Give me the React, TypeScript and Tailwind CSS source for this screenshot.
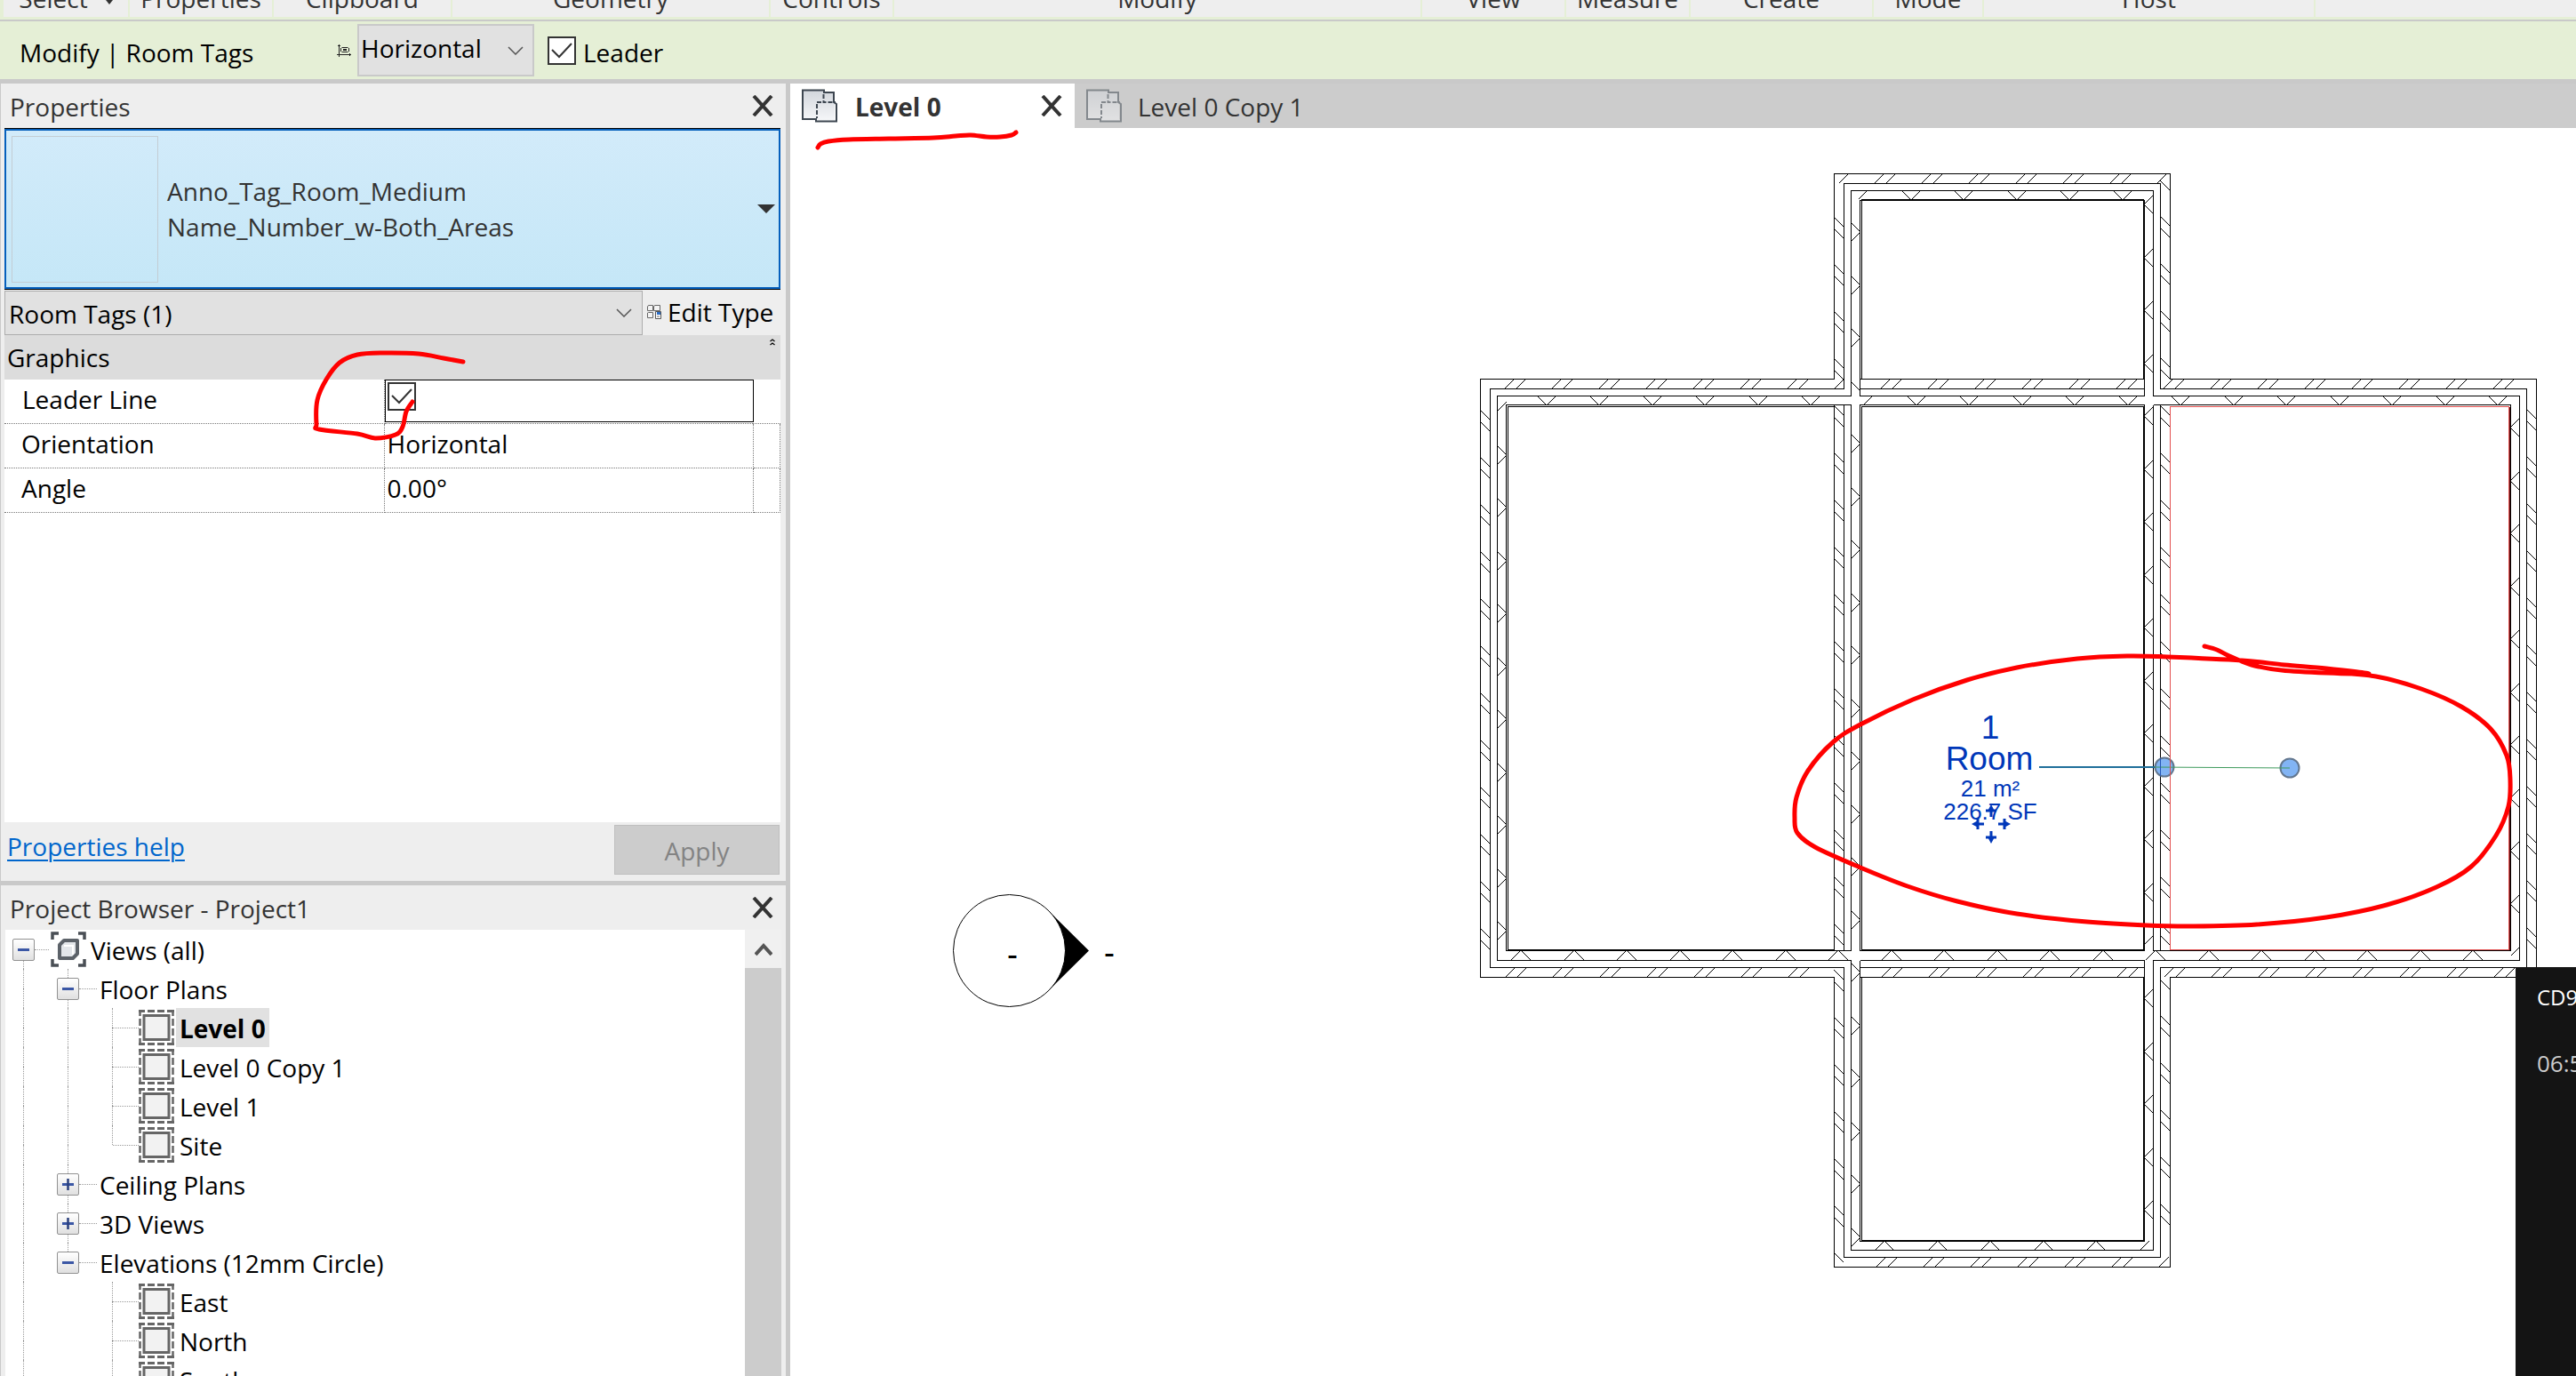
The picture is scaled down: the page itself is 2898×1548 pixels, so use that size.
import type { ReactNode } from "react";

type Point = [number, number];

/* ---------- Small icons ---------- */

function CloseIcon() {
  return (
    <svg viewBox="0 0 24 24" className="size-6" fill="none" stroke="#333" strokeWidth="4">
      <path d="M2 1 L22 23 M22 1 L2 23" />
    </svg>
  );
}

function Chevron({ className }: { className: string }) {
  return (
    <svg viewBox="0 0 18 10" className={className} fill="none" stroke="#555" strokeWidth="1.5">
      <path d="M1 1 L9 9 L17 1" />
    </svg>
  );
}

function TagIcon() {
  return (
    <svg viewBox="0 0 17 16" className="h-4 w-[17px]" fill="none" stroke="#222" strokeWidth="1">
      <path d="M2.5 1 V15 M0 12.5 H16 M1 2.5 H4 M14.5 11 V14 M5.5 4.5 H12.5 M5.5 9.5 H12.5 M4.5 5 V9 M13.5 5 V9 M7 6.5 H11 M7 7.5 H11" />
    </svg>
  );
}

function EditTypeIcon() {
  return (
    <svg viewBox="0 0 18 18" className="size-[18px]" fill="#f4f4f4" stroke="#666" strokeWidth="1">
      <path d="M2.5 1.5 H7.5 V7.5 H1.5 V3 Z M9.5 1.5 H15.5 V7.5 H8.5 V3 Z M2.5 9.5 H7.5 V15.5 H1.5 V10 Z" />
      <path d="M10.5 8.5 H16.5 V16.5 H10.5 Z" fill="#fff" stroke="#555" />
      <path d="M12 9 H16 V12 H12 Z" fill="#2b6cc4" stroke="none" />
      <path d="M12 14 H15" />
    </svg>
  );
}

function SheetIcon({ faded }: { faded?: boolean }) {
  return (
    <svg viewBox="0 0 40 38" className={faded ? "h-[38px] w-10 opacity-50" : "h-[38px] w-10"}>
      <defs>
        <linearGradient id={faded ? "sheetB" : "sheetA"} x1="0" y1="0" x2="0" y2="1">
          <stop offset="0" stopColor="#d2d6dc" />
          <stop offset="1" stopColor="#f6f7f9" />
        </linearGradient>
      </defs>
      <g fill={faded ? "url(#sheetB)" : "url(#sheetA)"} stroke="#3d4650" strokeWidth="2">
        <path d="M1 1.5 H24 L26 4 H37 V34 L39 36 H16 V34 H1 Z" stroke="none" />
        <path d="M16 34 H1 V1.5 H25 V4" fill="none" />
        <path d="M24 4 H36 V15 L39 17 V36.5 H16 V33" fill="none" />
      </g>
      <path d="M24.5 6 V15 H38 M17 15 H22 M17 17 V33" fill="none" stroke="#3d4650" strokeWidth="2" strokeDasharray="5 2" />
    </svg>
  );
}

function ViewsIcon() {
  return (
    <svg viewBox="0 0 40 40" className="size-10" fill="none" stroke="#4a4f55">
      <path d="M2 9 V2 H9 M31 2 H38 V9 M2 31 V38 H9 M31 38 H38 V31" strokeWidth="3.5" />
      <path d="M10 15 L15 10 H30 V25 L25 30 H10 Z" strokeWidth="4" fill="#e3e6ea" strokeLinejoin="round" stroke="#5c6269" />
      <path d="M15 16 H25 V26" strokeWidth="2" stroke="#fff" />
    </svg>
  );
}

function PlanIcon() {
  return (
    <svg viewBox="0 0 40 40" className="size-10 shrink-0" fill="none" stroke="#666">
      <path d="M0 1.5 H40 M0 38.5 H40" strokeWidth="3" strokeDasharray="8 3" strokeDashoffset="1" />
      <path d="M1.5 0 V40 M38.5 0 V40" strokeWidth="2.5" strokeDasharray="8 3" strokeDashoffset="1" />
      <rect x="6" y="6.5" width="28" height="27" fill="#f2f2f2" strokeWidth="3" />
    </svg>
  );
}

function Expander({ open, label }: { open: boolean; label: string }) {
  return (
    <button
      type="button"
      aria-label={(open ? "Collapse " : "Expand ") + label}
      aria-expanded={open}
      className="flex size-[25px] shrink-0 items-center justify-center rounded-[2px] border border-[#919191] bg-linear-to-b from-white to-[#e0e0e0]"
    >
      <svg viewBox="0 0 13 13" className="size-[13px]" stroke="#3b57a5" strokeWidth="3">
        <path d="M0 6.5 H13" />
        {!open && <path d="M6.5 0 V13" stroke="#2a3f7d" strokeWidth="2.5" />}
      </svg>
    </button>
  );
}

function CheckBox({ label, className, id }: { label?: string; className: string; id: string }) {
  return (
    <span className={className}>
      <input
        id={id}
        aria-label={label}
        type="checkbox"
        defaultChecked
        className="col-start-1 row-start-1 size-8 appearance-none border-2 border-[#333] bg-white"
      />
      <svg
        viewBox="0 0 32 32"
        className="pointer-events-none col-start-1 row-start-1 size-8"
        fill="none"
        stroke="#333"
        strokeWidth="2"
      >
        <path d="M5 15 L13 23 L27 8" />
      </svg>
    </span>
  );
}

/* ---------- Ribbon ---------- */

function RibbonPanel({ width, label, children }: { width: string; label: string; children?: ReactNode }) {
  return (
    <div className={"flex h-[19px] items-end justify-center gap-5 overflow-hidden bg-[#eee] pb-0.5 text-[#333] " + width}>
      <span className="leading-[38px]">{label}</span>
      {children}
    </div>
  );
}

function Ribbon() {
  return (
    <header className="flex h-[22px] shrink-0 gap-0.5 overflow-hidden bg-[#e5efd6] pl-1">
      <RibbonPanel width="w-[140px]" label="Select">
        <svg viewBox="0 0 8 5" className="mb-3 h-[5px] w-2" fill="#333">
          <path d="M0 0 H8 L4 5 Z" />
        </svg>
      </RibbonPanel>
      <RibbonPanel width="w-[160px]" label="Properties" />
      <RibbonPanel width="w-[199px]" label="Clipboard" />
      <RibbonPanel width="w-[356px]" label="Geometry" />
      <RibbonPanel width="w-[137px]" label="Controls" />
      <RibbonPanel width="w-[592px]" label="Modify" />
      <RibbonPanel width="w-[160px]" label="View" />
      <RibbonPanel width="w-[138px]" label="Measure" />
      <RibbonPanel width="w-[204px]" label="Create" />
      <RibbonPanel width="w-[122px]" label="Mode" />
      <RibbonPanel width="w-[371px]" label="Host" />
      <RibbonPanel width="flex-1" label="" />
    </header>
  );
}

function OptionsBar() {
  return (
    <div className="flex h-[72px] shrink-0 items-center border-t-2 border-b-5 border-[#c9c9c9] bg-[#e5efd6] pl-[22px]">
      <h1 className="w-[357px] pt-1">Modify | Room Tags</h1>
      <TagIcon />
      <div className="ml-1.5 grid w-[199px]">
        <select
          aria-label="Tag orientation"
          className="col-start-1 row-start-1 h-[59px] appearance-none border-2 border-[#c9c9c9] bg-[#e1e1e1] pb-1.5 pl-0.5"
        >
          <option>Horizontal</option>
        </select>
        <Chevron className="pointer-events-none col-start-1 row-start-1 mr-3 h-2.5 w-[18px] self-center justify-self-end" />
      </div>
      <label htmlFor="leader" className="ml-[15px] flex items-center gap-2">
        <CheckBox id="leader" className="grid" />
        <span className="pt-1">Leader</span>
      </label>
    </div>
  );
}

/* ---------- Properties palette ---------- */

function PaletteHeader({ title }: { title: string }) {
  return (
    <div className="flex h-[50px] shrink-0 items-center justify-between pr-3.5 pl-2.5 text-[#333]">
      <h2 className="pt-0.5">{title}</h2>
      <button type="button" aria-label={"Close " + title}>
        <CloseIcon />
      </button>
    </div>
  );
}

function Properties() {
  return (
    <section className="flex h-[902px] shrink-0 flex-col border-b-5 border-[#c9c9c9]">
      <PaletteHeader title="Properties" />
      <div className="ml-1 flex flex-1 flex-col pr-1.5">
        <button
          type="button"
          className="my-px flex h-[180px] shrink-0 items-center border-2 border-[#0560bd] bg-linear-to-b from-[#d2ebfa] to-[#c5e7f7] pl-1.5 text-left text-[#333] shadow-[0_-1px_0_#000,0_1px_0_#000]"
        >
          <span className="mr-2.5 h-[165px] w-[165px] border border-[#c3cdd4]" />
          <span className="flex-1 leading-10">
            Anno_Tag_Room_Medium
            <br />
            Name_Number_w-Both_Areas
          </span>
          <svg viewBox="0 0 20 10" className="mr-1 h-2.5 w-5" fill="#333">
            <path d="M0 0 H20 L10 10 Z" />
          </svg>
        </button>
        <div className="mt-px flex h-[50px] shrink-0">
          <div className="grid flex-1">
            <select
              aria-label="Selected elements"
              className="col-start-1 row-start-1 appearance-none border border-[#adadad] bg-[#e1e1e1] pt-0.5 pl-1"
            >
              <option>Room Tags (1)</option>
            </select>
            <Chevron className="pointer-events-none col-start-1 row-start-1 mr-3 h-2.5 w-[18px] self-center justify-self-end" />
          </div>
          <button type="button" className="flex w-[155px] items-center gap-1.5 pb-0.5 pl-1 whitespace-nowrap">
            <EditTypeIcon />
            Edit Type
          </button>
        </div>
        <div className="flex-1 bg-white">
          <table className="w-full table-fixed border-collapse">
            <colgroup>
              <col className="w-[427px]" />
              <col />
              <col className="w-[30px]" />
            </colgroup>
            <thead>
              <tr className="h-[50px] bg-[#dcdcdc]">
                <th colSpan={2} scope="colgroup" className="pl-[3px] text-left font-normal">
                  Graphics
                </th>
                <th className="align-top">
                  <button type="button" aria-label="Collapse Graphics" className="block pt-1 pl-[18px]">
                    <svg viewBox="0 0 6 8" className="h-2 w-1.5" fill="none" stroke="#000" strokeWidth="1.2">
                      <path d="M0.5 3 L3 1 L5.5 3 M0.5 7 L3 5 L5.5 7" />
                    </svg>
                  </button>
                </th>
              </tr>
            </thead>
            <tbody>
              <tr className="h-[49px]">
                <th scope="row" className="border-r border-b border-dotted border-[#777] p-0 pb-1 pl-5 text-left font-normal">
                  Leader Line
                </th>
                <td className="p-0">
                  <div className="flex h-[48px] items-start border border-black pt-0.5 pl-0.5">
                    <CheckBox id="leader-line" label="Leader Line" className="grid" />
                  </div>
                </td>
                <td className="border-b border-dotted border-[#777]" />
              </tr>
              <tr className="h-[50px]">
                <th scope="row" className="border border-l-0 border-dotted border-[#777] p-0 pb-1 pl-[19px] text-left font-normal">
                  Orientation
                </th>
                <td className="border border-dotted border-[#777] p-0 pb-1 pl-[3px]">Horizontal</td>
                <td className="border border-dotted border-[#777]" />
              </tr>
              <tr className="h-[50px]">
                <th scope="row" className="border border-l-0 border-dotted border-[#777] p-0 pb-1 pl-[19px] text-left font-normal">
                  Angle
                </th>
                <td className="border border-dotted border-[#777] p-0 pb-1 pl-[3px]">0.00°</td>
                <td className="border border-dotted border-[#777]" />
              </tr>
            </tbody>
          </table>
        </div>
        <div className="flex h-[66px] shrink-0 items-start justify-between pt-[3px] pr-px">
          <a href="#properties-help" className="pt-1.5 pl-[3px] text-[#0066cc] underline decoration-2 underline-offset-4">
            Properties help
          </a>
          <button type="button" disabled className="h-14 w-[186px] border border-[#bfbfbf] bg-[#ccc] pt-0.5 text-[#838383]">
            Apply
          </button>
        </div>
      </div>
    </section>
  );
}

/* ---------- Project browser ---------- */

type Row = { level: number; label: string; open?: boolean; active?: boolean; last?: boolean; closed?: boolean };

const rows: Row[] = [
  { level: 0, label: "Views (all)", open: true },
  { level: 1, label: "Floor Plans", open: true },
  { level: 2, label: "Level 0", active: true },
  { level: 2, label: "Level 0 Copy 1" },
  { level: 2, label: "Level 1" },
  { level: 2, label: "Site", last: true },
  { level: 1, label: "Ceiling Plans", open: false },
  { level: 1, label: "3D Views", open: false },
  { level: 1, label: "Elevations (12mm Circle)", open: true, last: true },
  { level: 2, label: "East", closed: true },
  { level: 2, label: "North", closed: true },
  { level: 2, label: "South", closed: true },
];

function Guide({ above, below, children }: { above: boolean; below: boolean; children?: ReactNode }) {
  return (
    <span className="flex h-full w-[25px] shrink-0 flex-col items-center">
      <span className={above ? "w-px flex-1 border-l border-dotted border-[#999]" : "flex-1"} />
      {children}
      <span className={below ? "w-px flex-1 border-l border-dotted border-[#999]" : "flex-1"} />
    </span>
  );
}

function TreeRow({ row }: { row: Row }) {
  if (row.level === 0) {
    return (
      <li role="treeitem" className="flex h-11 items-center pl-2">
        <Guide above={false} below>
          <Expander open label={row.label} />
        </Guide>
        <span className="mr-0.5 w-4 border-t border-dotted border-[#999]" />
        <ViewsIcon />
        <span className="pt-0.5 pl-[5px]">{row.label}</span>
      </li>
    );
  }
  if (row.level === 1) {
    return (
      <li role="treeitem" className="flex h-11 items-center pl-2">
        <Guide above below />
        <span className="w-[25px]" />
        <Guide above below={!row.last}>
          <Expander open={!!row.open} label={row.label} />
        </Guide>
        <span className="mr-[3px] w-5 border-t border-dotted border-[#999]" />
        <span className="pt-0.5">{row.label}</span>
      </li>
    );
  }
  return (
    <li role="treeitem" className="flex h-11 items-center pl-2">
      <Guide above below />
      <span className="w-[25px]" />
      <Guide above={!row.closed} below={!row.closed} />
      <span className="w-[25px]" />
      <Guide above below={!row.last} />
      <span className="-ml-3 w-[29px] shrink-0 border-t border-dotted border-[#999]" />
      <PlanIcon />
      <span className={row.active ? "ml-0.5 h-11 bg-[#e1e1e1] px-1 leading-[46px] font-bold" : "ml-0.5 px-1 pt-0.5"}>
        {row.label}
      </span>
    </li>
  );
}

function ProjectBrowser() {
  return (
    <section className="flex min-h-0 flex-1 flex-col">
      <PaletteHeader title="Project Browser - Project1" />
      <div className="ml-[5px] flex min-h-0 flex-1 pr-[5px]">
        <ul role="tree" className="flex-1 overflow-hidden bg-white">
          {rows.map((row) => (
            <TreeRow key={row.label} row={row} />
          ))}
        </ul>
        <div className="flex w-[41px] flex-col bg-[#ccc]">
          <button type="button" aria-label="Scroll up" className="flex h-[43px] items-center justify-center bg-[#f0f0f0]">
            <svg viewBox="0 0 20 16" className="h-4 w-5" fill="none" stroke="#555" strokeWidth="4">
              <path d="M1 14 L10 4 L19 14" />
            </svg>
          </button>
        </div>
      </div>
    </section>
  );
}

/* ---------- Drawing area ---------- */

type Kind = "brickH" | "brickV" | "down" | "up" | "right" | "left";

/* [kind, across, depth, from, to, first mark]: a run of hatch marks in one wall leaf */
type Hatch = [Kind, number, number, number, number, number];

const hatches: Hatch[] = [
  ["brickH", 195, 11, 2066, 2441, 2055],
  ["brickH", 426, 11, 1676, 2074, 1692],
  ["brickH", 426, 11, 2092, 2411, 2115],
  ["brickH", 426, 11, 2430, 2853, 2433],
  ["brickH", 1088, 11, 1676, 2074, 1693],
  ["brickH", 1088, 11, 2093, 2411, 2116],
  ["brickH", 1088, 11, 2430, 2853, 2434],
  ["brickH", 1414, 11, 2074, 2441, 2110],
  ["brickV", 2063, 11, 206, 437, 244],
  ["brickV", 2430, 11, 200, 437, 190],
  ["brickV", 2063, 11, 456, 1069, 456],
  ["brickV", 2430, 11, 456, 1069, 456],
  ["brickV", 2063, 11, 1091, 1425, 1091],
  ["brickV", 2430, 11, 1102, 1414, 1089],
  ["brickV", 1665, 11, 437, 1099, 461],
  ["brickV", 2842, 11, 437, 1099, 460],
  ["down", 214, 10, 2083, 2411, 2079],
  ["down", 445, 10, 1684, 2082, 1669],
  ["down", 445, 10, 2092, 2411, 2085],
  ["down", 445, 10, 2422, 2834, 2442],
  ["up", 1069, 11, 1684, 2834, 1699],
  ["up", 1396, 10, 2092, 2422, 2109],
  ["right", 2082, 10, 225, 445, 250],
  ["right", 2082, 10, 455, 1069, 488],
  ["right", 2082, 10, 1080, 1406, 1083],
  ["right", 1684, 10, 445, 1080, 441],
  ["left", 2412, 10, 214, 445, 219],
  ["left", 2412, 10, 457, 1069, 457],
  ["left", 2412, 10, 1080, 1406, 1112],
  ["left", 2824, 10, 445, 1080, 470],
];

function hatchPath([kind, at, d, from, to, start]: Hatch): string {
  const brick = kind === "brickH" || kind === "brickV";
  const pitch = brick ? 53 : 59.5;
  const parts: string[] = [];
  const stroke = (a: number, b: number, horizontal: boolean, c: number, e: number) => {
    if (Math.min(a, b) < from || Math.max(a, b) > to) return;
    parts.push(horizontal ? `M${a} ${c}L${b} ${e}` : `M${c} ${a}L${e} ${b}`);
  };
  for (let p = start; p < to; p += pitch) {
    const s = Math.round(p);
    if (kind === "brickH") {
      stroke(s, s + d, true, at + d, at);
      stroke(s + 13, s + 13 + d, true, at + d, at);
    } else if (kind === "brickV") {
      stroke(s, s + d, false, at, at + d);
      stroke(s + 13, s + 13 + d, false, at, at + d);
    } else {
      const horizontal = kind === "down" || kind === "up";
      const wide = kind === "down" || kind === "right";
      const base = wide ? at : at + d;
      const tip = wide ? at + d : at;
      stroke(s, s + d, horizontal, base, tip);
      stroke(s + d + 1, s + 2 * d + 1, horizontal, tip, base);
    }
  }
  return parts.join("");
}

const walls = [
  "M2063 426V195H2441V426H2853V1099H2441V1425H2063V1099H1665V426Z",
  "M2074 437V206H2430V437H2842V1088H2430V1414H2074V1088H1676V437Z",
  "M2082 445V214H2422V445H2834V1080H2422V1406H2082V1080H1684V445Z",
  "M2092 445V225H2412V445M2094 426V224H2411V426",
  "M2082 455H1694V1069H2082M2063 457H1696V1068H2063",
  "M2092 426H2412M2092 437H2412M2092 445H2412M2092 455H2412V1069H2092ZM2094 457H2411V1068H2094Z",
  "M2063 455V1069M2074 455V1069M2082 455V1069M2422 455V1069M2430 455V1069",
  "M2422 455H2824V1069H2422",
  "M2092 1080H2412M2092 1088H2412M2092 1099H2412",
  "M2092 1080V1396H2412V1080M2094 1099V1395H2411V1099",
].join("");

function MoveArrow({ x, y, turn }: { x: number; y: number; turn: number }) {
  return (
    <path
      transform={`translate(${x} ${y}) rotate(${turn})`}
      d="M-1.5 -7H1.5V-1.5H6V1.5H3L0 7L-3 1.5H-6V-1.5H-1.5Z"
      fill="#0037b9"
    />
  );
}

function FloorPlan() {
  return (
    <svg
      viewBox="889 144 2009 1404"
      preserveAspectRatio="xMinYMin meet"
      className="block size-full font-['Liberation_Sans',Arial,sans-serif]"
      role="img"
      aria-label="Floor plan, Level 0"
    >
      <g transform="translate(0.5 0.5)" fill="none" stroke="#000" strokeWidth="1">
        <path d={walls} shapeRendering="crispEdges" />
        <path d={hatches.map(hatchPath).join("")} shapeRendering="crispEdges" />
        <path d="M2441 457H2822V1068H2441Z" stroke="#e4504f" shapeRendering="crispEdges" />
        <path d="M2823 457V1068" stroke="#5a1010" shapeRendering="crispEdges" />
        <circle cx="1135" cy="1069" r="63" />
      </g>
      <path d="M1179 1024 L1225 1069.5 L1180 1114 A63 63 0 0 0 1179 1024 Z" />
      <g fontSize="36" fill="#000" textAnchor="middle">
        <text x="1139" y="1086">-</text>
        <text x="1248" y="1084">-</text>
      </g>
      <g fill="#0037b9" textAnchor="middle">
        <text x="2239" y="831" fontSize="37">1</text>
        <text x="2238" y="866" fontSize="37">Room</text>
        <text x="2239" y="896" fontSize="26">21 m²</text>
        <text x="2239" y="922" fontSize="26">226.7 SF</text>
      </g>
      <g fill="#82b4f4" stroke="#63778f" strokeWidth="2">
        <circle cx="2435" cy="863" r="10.5" />
        <circle cx="2576" cy="864" r="10.5" />
      </g>
      <path d="M2294 863H2424" stroke="#1f6f9a" strokeWidth="2" />
      <path d="M2424 863L2576 864" stroke="#3e9a5c" strokeWidth="1" />
      <path d="M2430.5 853V873" stroke="#2456b8" strokeWidth="1" />
      <path d="M2441.5 854V872" stroke="#e4504f" strokeWidth="1" />
      <MoveArrow x={2240} y={912} turn={180} />
      <MoveArrow x={2225} y={927} turn={90} />
      <MoveArrow x={2255} y={927} turn={-90} />
      <MoveArrow x={2240} y={942} turn={0} />
    </svg>
  );
}

function Workspace() {
  return (
    <main className="flex min-w-0 flex-1 flex-col bg-white">
      <div role="tablist" className="flex h-[50px] shrink-0 bg-[#ccc]">
        <div className="flex w-80 items-center bg-white pr-3.5 pl-[13px] text-[#333]">
          <SheetIcon />
          <button type="button" role="tab" aria-selected="true" className="flex-1 pt-0.5 pl-5 text-left font-bold">
            Level 0
          </button>
          <button type="button" aria-label="Close Level 0">
            <CloseIcon />
          </button>
        </div>
        <button type="button" role="tab" aria-selected="false" className="flex items-center gap-[18px] pl-[13px] text-[#333]">
          <SheetIcon faded />
          <span className="pt-0.5">Level 0 Copy 1</span>
        </button>
      </div>
      <div className="min-h-0 flex-1">
        <FloorPlan />
      </div>
    </main>
  );
}

/* ---------- Pen marks ---------- */

const marks: Point[][] = [
  [[920, 166], [923, 162], [932, 159], [955, 157], [1000, 156], [1050, 155], [1075, 153], [1092, 152], [1110, 154], [1125, 154], [1138, 152], [1143, 149]],
  [[521, 407], [499, 403], [471, 398], [430, 397], [402, 399], [382, 408], [367, 427], [357, 450], [356, 477], [359, 483], [402, 488], [422, 493], [445, 489], [453, 480], [457, 463], [464, 452]],
  [
    [2480, 727], [2494, 731], [2508, 738], [2533, 748], [2567, 754], [2617, 757], [2665, 758], [2617, 752], [2570, 748], [2522, 743],
    [2438, 739], [2393, 738], [2337, 741], [2269, 751], [2213, 765], [2152, 787], [2093, 815], [2062, 835], [2034, 867], [2021, 897],
    [2019, 920], [2022, 937], [2042, 953], [2093, 976], [2146, 997], [2202, 1014], [2269, 1028], [2348, 1037], [2415, 1041],
    [2466, 1042], [2539, 1040], [2617, 1032], [2685, 1018], [2741, 998], [2780, 975], [2808, 940], [2822, 907], [2824, 877],
    [2820, 850], [2802, 820], [2769, 795], [2724, 775], [2673, 761], [2617, 756],
  ],
];

/* Catmull-Rom spline through the pen's points */
function penPath(points: Point[]): string {
  let d = `M${points[0][0]} ${points[0][1]}`;
  for (let i = 0; i < points.length - 1; i++) {
    const a = points[Math.max(0, i - 1)];
    const b = points[i];
    const c = points[i + 1];
    const e = points[Math.min(points.length - 1, i + 2)];
    d += `C${b[0] + (c[0] - a[0]) / 6} ${b[1] + (c[1] - a[1]) / 6} ${c[0] - (e[0] - b[0]) / 6} ${c[1] - (e[1] - b[1]) / 6} ${c[0]} ${c[1]}`;
  }
  return d;
}

function PenMarks() {
  return (
    <svg
      viewBox="0 0 2898 1548"
      preserveAspectRatio="xMinYMin meet"
      className="pointer-events-none absolute inset-0 size-full"
      fill="none"
      stroke="#f00"
      strokeWidth="5"
      strokeLinecap="round"
      strokeLinejoin="round"
      aria-hidden="true"
    >
      {marks.map((points, i) => (
        <path key={i} d={penPath(points)} />
      ))}
    </svg>
  );
}

export default function App() {
  return (
    <div className="relative flex h-screen flex-col overflow-hidden bg-[#eee] font-['Open_Sans','Noto_Sans',sans-serif] text-[28px] leading-9 text-black">
      <Ribbon />
      <OptionsBar />
      <div className="flex min-h-0 flex-1">
        <aside className="flex w-[889px] shrink-0 flex-col border-r-5 border-l border-[#c9c9c9] bg-[#eee]">
          <Properties />
          <ProjectBrowser />
        </aside>
        <Workspace />
      </div>
      <aside className="absolute right-0 bottom-0 flex h-[460px] w-[68px] flex-col gap-9 overflow-hidden bg-[#141414] pt-3.5 pl-6 whitespace-nowrap">
        <p className="text-[24px] leading-10 text-white">CD9</p>
        <p className="text-[26px] text-[#ccc]">06:5</p>
      </aside>
      <PenMarks />
    </div>
  );
}
